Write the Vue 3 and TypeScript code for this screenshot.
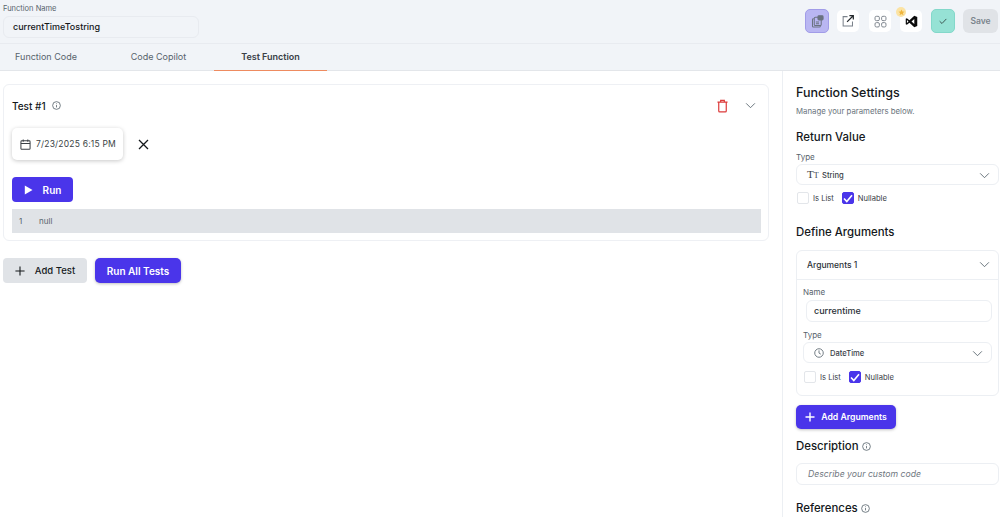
<script setup lang="ts">
const tabs: string[] = ['Function Code', 'Code Copilot', 'Test Function']
</script>

<template>
  <div class="page">
    <header class="topbar">
      <div class="fname">
        <label class="fname-label">Function Name</label>
        <div class="fname-input">currentTimeTostring</div>
      </div>
      <div class="actions">
        <button class="sq sq-purple">
          <svg width="13" height="13" viewBox="0 0 14 14" fill="none" stroke="#6a7280" stroke-width="1.100"><path d="M3 4h-.4a1 1 0 0 0-1 1v7a1 1 0 0 0 1 1h6.400a1 1 0 0 0 1-1v-.6"/><rect x="3.500" y="2.500" width="7.500" height="8.800" rx="1.200"/><rect x="7.500" y=".8" width="5.500" height="4.500" rx="1" fill="#6a7280"/><path d="M5.300 7.500h3.400M5.300 9.300h3.400"/></svg>
        </button>
        <button class="sq sq-white">
          <svg width="14" height="14" viewBox="0 0 15 15" fill="none" stroke="#7b828b" stroke-width="1.100"><path d="M7 2.800H2.300v10h10V8"/><path d="M6.500 8.500 12.800 2.200M9 1.800h4.200V6" stroke="#24282c" stroke-width="1.300"/></svg>
        </button>
        <button class="sq sq-white grid-btn">
          <svg width="13" height="13" viewBox="0 0 15 15" fill="none" stroke="#7b828b" stroke-width="1.100"><rect x="1.200" y="1.500" width="5" height="5" rx="1.500"/><rect x="8.800" y="1.500" width="5" height="5" rx="1.500"/><rect x="1.200" y="8.800" width="5" height="5" rx="1.500"/><rect x="8.800" y="8.800" width="5" height="5" rx="1.500"/></svg>
        </button>
        <button class="sq sq-white vs">
          <span class="star">
            <svg width="7" height="7" viewBox="0 0 10 10"><path d="M5 .6 6.300 3.500l3.100.3-2.400 2 .8 3.100L5 7.300 2.200 8.900 3 5.800.6 3.800l3.100-.3z" fill="#f0b53c"/></svg>
          </span>
          <svg width="13" height="13" viewBox="0 0 14 14" fill="#0b0b0b"><path d="M10 .7 13.200 2.200v9.600L10 13.300 4.800 8.400 2 10.500.8 9.900V4.100L2 3.500l2.800 2.100zM10 4.200 7 7l3 2.800zM2.100 5.300v3.400L3.800 7z"/></svg>
        </button>
        <button class="sq sq-teal">
          <svg width="10" height="10" viewBox="0 0 12 12" fill="none" stroke="#3e5a55" stroke-width="1.200"><path d="M2 6.300 4.800 9 10 3.500"/></svg>
        </button>
        <button class="save">Save</button>
      </div>
    </header>

    <nav class="tabs">
      <div v-for="(t, i) in tabs" :key="t" class="tab" :class="[`tab-${i}`, { active: i === 2 }]">{{ t }}</div>
    </nav>

    <div class="body">
      <main class="main">
        <section class="card">
          <div class="card-head">
            <span class="test-title">Test #1</span>
            <svg class="info" width="9" height="9" viewBox="0 0 10 10" fill="none" stroke="#57636c" stroke-width=".9"><circle cx="5" cy="5" r="4.300"/><path d="M5 4.500v2.600M5 2.700v.8"/></svg>
            <span class="spacer"></span>
            <svg class="trash" width="11" height="14" viewBox="0 0 12 14" fill="none" stroke="#dc3a3a" stroke-width="1.300"><path d="M.5 2.800h11M4 2.600V.9h4v1.700M1.900 3v9.500a1 1 0 0 0 1 1h6.200a1 1 0 0 0 1-1V3"/></svg>
            <svg class="chev-main" width="11" height="7" viewBox="0 0 12 8" fill="none" stroke="#57636c" stroke-width="1"><path d="M1 1.500 6 6.500l5-5"/></svg>
          </div>
          <div class="date-row">
            <div class="date">
              <svg width="11" height="11" viewBox="0 0 12 12" fill="none" stroke="#3a3f45" stroke-width="1.100"><rect x="1" y="2" width="10" height="9.300" rx="1"/><path d="M1 4.800h10M3.500.5v2.500M8.500.5v2.500"/></svg>
              <span>7/23/2025 6:15 PM</span>
            </div>
            <svg class="close" width="11" height="11" viewBox="0 0 11 11" fill="none" stroke="#14181b" stroke-width="1.300"><path d="M1 1l9 9M10 1l-9 9"/></svg>
          </div>
          <button class="run">
            <svg width="9" height="10" viewBox="0 0 9 10"><path d="M.8.500 8.500 5 .8 9.500z" fill="#fff"/></svg>
            <span>Run</span>
          </button>
          <div class="output"><span class="ln">1</span><span>null</span></div>
        </section>
        <div class="main-actions">
          <button class="add-test">
            <svg width="10" height="10" viewBox="0 0 12 12" stroke="#14181b" stroke-width="1.300"><path d="M6 .5v11M.5 6h11"/></svg>
            <span>Add Test</span>
          </button>
          <button class="run-all">Run All Tests</button>
        </div>
      </main>

      <aside class="side">
        <h2 class="side-title">Function Settings</h2>
        <p class="side-sub">Manage your parameters below.</p>

        <h3 class="h3 return-h">Return Value</h3>
        <div class="lbl type-lbl">Type</div>
        <div class="select">
          <span class="tt">T<small>T</small></span>
          <span>String</span>
          <span class="spacer"></span>
          <svg width="11" height="7" viewBox="0 0 12 8" fill="none" stroke="#57636c" stroke-width="1"><path d="M1 1.500 6 6.500l5-5"/></svg>
        </div>
        <div class="checks">
          <span class="cb"></span><span class="cb-lbl">Is List</span>
          <span class="cb on"><svg width="10" height="9" viewBox="0 0 10 9" fill="none" stroke="#fff" stroke-width="1.600"><path d="M1 4.500 3.800 7.500 9 1.200"/></svg></span><span class="cb-lbl">Nullable</span>
        </div>

        <h3 class="h3 define-h">Define Arguments</h3>
        <div class="arg">
          <div class="arg-head">
            <span>Arguments 1</span>
            <svg width="11" height="7" viewBox="0 0 12 8" fill="none" stroke="#57636c" stroke-width="1"><path d="M1 1.500 6 6.500l5-5"/></svg>
          </div>
          <div class="arg-body">
            <div class="lbl">Name</div>
            <div class="name-input">currentime</div>
            <div class="lbl arg-type">Type</div>
            <div class="select inner">
              <svg width="10" height="10" viewBox="0 0 11 11" fill="none" stroke="#57636c" stroke-width=".9"><circle cx="5.500" cy="5.500" r="4.700"/><path d="M5.500 2.600v3l2 1.200"/></svg>
              <span>DateTime</span>
              <span class="spacer"></span>
              <svg width="11" height="7" viewBox="0 0 12 8" fill="none" stroke="#57636c" stroke-width="1"><path d="M1 1.500 6 6.500l5-5"/></svg>
            </div>
            <div class="checks inner-checks">
              <span class="cb"></span><span class="cb-lbl">Is List</span>
              <span class="cb on"><svg width="10" height="9" viewBox="0 0 10 9" fill="none" stroke="#fff" stroke-width="1.600"><path d="M1 4.500 3.800 7.500 9 1.200"/></svg></span><span class="cb-lbl">Nullable</span>
            </div>
          </div>
        </div>

        <button class="add-arg">
          <svg width="10" height="10" viewBox="0 0 10 10" stroke="#fff" stroke-width="1.400"><path d="M5 .5v9M.5 5h9"/></svg>
          <span>Add Arguments</span>
        </button>

        <div class="h3 row-h desc-h">Description
          <svg width="9" height="9" viewBox="0 0 10 10" fill="none" stroke="#57636c" stroke-width=".9"><circle cx="5" cy="5" r="4.300"/><path d="M5 4.500v2.600M5 2.700v.8"/></svg>
        </div>
        <div class="desc">Describe your custom code</div>
        <div class="h3 row-h ref-h">References
          <svg width="9" height="9" viewBox="0 0 10 10" fill="none" stroke="#57636c" stroke-width=".9"><circle cx="5" cy="5" r="4.300"/><path d="M5 4.500v2.600M5 2.700v.8"/></svg>
        </div>
      </aside>
    </div>
  </div>
</template>

<style>
html, body { margin: 0; background: #fff; overflow: hidden; }
</style>

<style scoped>
* { box-sizing: border-box; }
.page { width: 1000px; height: 517px; overflow: hidden; display: flex; flex-direction: column; font-family: "Inter", "Noto Sans", sans-serif; color: #14181b; background: #fff; }
button { font-family: inherit; border: 0; padding: 0; cursor: pointer; }
.spacer { flex: 1; }

.topbar { height: 44px; flex: none; background: #f1f4f8; border-bottom: 1px solid #e8ebf0; display: flex; justify-content: space-between; padding: 0 2px 0 3px; }
.fname { padding-top: 4px; }
.fname-label { display: block; font-size: 7.500px; line-height: 10px; color: #57636c; }
.fname-input { margin-top: 2px; width: 196px; height: 22px; border: 1px solid #e8ebf0; border-radius: 6px; padding-left: 9px; font-size: 9px; line-height: 20px; font-weight: 500; color: #14181b; }
.actions { display: flex; align-items: center; gap: 8px; padding-bottom: 1px; }
.sq { width: 22px; height: 22px; border-radius: 5px; display: flex; align-items: center; justify-content: center; position: relative; }
.sq-purple { width: 24px; height: 24px; background: #b9b6f2; border: 1px solid #a19ce8; }
.sq-white { background: #fff; }
.sq-teal { width: 24px; height: 24px; background: #96e2d5; border: 1px solid #83d8ca; margin-left: 1px; }
.grid-btn { margin-left: 2px; }
.vs { margin-left: 1px; }
.star { position: absolute; top: -3px; left: -4px; width: 10px; height: 10px; border-radius: 50%; background: #fbe3a4; display: flex; align-items: center; justify-content: center; }
.save { width: 35px; height: 24px; border-radius: 6px; background: #e0e3e7; color: #7a838c; font-size: 8.500px; font-weight: 600; }

.tabs { height: 27px; flex: none; background: #f1f4f8; border-bottom: 1px solid #e3e6ea; display: flex; position: relative; }
.tab { font-size: 9px; line-height: 26px; text-align: center; color: #57636c; }
.tab-0 { width: 92px; }
.tab-1 { width: 122px; padding-left: 11px; }
.tab-2 { width: 113px; font-weight: 600; color: #3a4047; height: 27px; border-bottom: 1px solid #ee8b60; }

.body { flex: 1; display: flex; min-height: 0; }
.main { width: 783px; flex: none; padding: 13px 13px 0 3px; border-right: 1px solid #eceff3; }
.card { height: 157px; border: 1px solid #eef0f4; border-radius: 6px; padding: 0 7px 6px 8px; }
.card-head { height: 41px; display: flex; align-items: center; gap: 6px; padding-right: 5px; }
.test-title { font-size: 10px; font-weight: 500; }
.trash { margin-right: 11px; }
.date-row { display: flex; align-items: center; margin-top: 2px; }
.date { width: 111px; height: 32px; border-radius: 5px; background: #fff; box-shadow: 0 1px 4px rgba(0,0,0,.22); display: flex; align-items: center; gap: 5px; padding-left: 8px; font-size: 8.500px; letter-spacing: .2px; color: #3a3f45; white-space: nowrap; }
.close { margin-left: 15px; }
.run { width: 61px; height: 25px; margin-top: 17px; border-radius: 4px; background: #4a35ea; color: #fff; font-size: 10px; font-weight: 600; display: flex; align-items: center; justify-content: center; gap: 10px; }
.output { height: 24px; margin-top: 7px; background: #e0e3e7; display: flex; align-items: center; font-size: 8px; color: #57636c; padding-left: 7px; }
.ln { width: 20px; }

.main-actions { display: flex; gap: 8px; margin-top: 17px; }
.add-test { width: 84px; height: 25px; border-radius: 4px; background: #e0e3e7; color: #14181b; font-size: 9.500px; font-weight: 500; display: flex; align-items: center; justify-content: center; gap: 10px; }
.run-all { width: 86px; height: 25px; border-radius: 5px; background: #4a35ea; color: #fff; font-size: 10px; font-weight: 600; box-shadow: 0 1px 3px rgba(0,0,0,.25); }

.side { flex: 1; padding: 14px 1px 0 13px; min-width: 0; overflow: hidden; }
.side-title { margin: 0; font-size: 12.500px; line-height: 15px; font-weight: 500; color: #14181b; }
.side-sub { margin: 6px 0 0; font-size: 7.800px; line-height: 10px; color: #6a747d; }
.h3 { margin: 0; font-size: 11.400px; line-height: 14px; font-weight: 500; color: #14181b; }
.return-h { margin-top: 14px; }
.lbl { font-size: 8px; line-height: 10px; color: #57636c; }
.type-lbl { margin-top: 8px; }
.select { height: 21px; margin-top: 2px; padding: 1px 8px 0 10px; border: 1px solid #eceff3; border-radius: 6px; display: flex; align-items: center; gap: 5px; font-size: 7.600px; color: #3a4047; font-weight: 500; }
.tt { font-size: 11px; line-height: 11px; font-family: "Liberation Serif", serif; color: #3a4047; width: 10px; white-space: nowrap; }
.tt small { font-size: 8px; }
.checks { display: flex; align-items: center; margin-top: 6px; height: 14px; font-size: 7.600px; color: #3a4047; padding-left: 1px; }
.cb { width: 12px; height: 12px; border: 1px solid #e3e6ea; border-radius: 2px; display: flex; align-items: center; justify-content: center; flex: none; }
.cb.on { background: #4a35ea; border-color: #4a35ea; margin-left: 8px; }
.cb-lbl { margin-left: 4px; }
.define-h { margin-top: 20px; }
.arg { margin-top: 11px; height: 146px; border: 1px solid #eceff3; border-radius: 6px; }
.arg-head { height: 29px; padding: 0 8px 1px 10px; border-bottom: 1px solid #eceff3; display: flex; align-items: center; justify-content: space-between; font-size: 8.500px; font-weight: 500; color: #2c3238; }
.arg-body { padding: 7px 6px 0 6px; }
.name-input { margin: 3px 0 0 3px; height: 22px; border: 1px solid #eceff3; border-radius: 6px; padding-left: 7px; font-size: 9px; line-height: 20px; color: #2c3238; font-weight: 500; }
.arg-type { margin-top: 8px; }
.inner { margin-top: 2px; gap: 6px; }
.inner-checks { margin-top: 7px; }
.add-arg { margin-top: 9px; width: 100px; height: 24px; border-radius: 5px; background: #4a35ea; color: #fff; font-size: 8.700px; font-weight: 600; display: flex; align-items: center; justify-content: center; gap: 6px; box-shadow: 0 1px 3px rgba(0,0,0,.25); }
.row-h { display: flex; align-items: center; gap: 3px; }
.desc-h { margin-top: 10px; }
.desc { margin-top: 10px; height: 22px; border: 1px solid #eceff3; border-radius: 6px; padding-left: 11px; font-size: 8.700px; line-height: 20px; font-style: italic; color: #6f7780; }
.ref-h { margin-top: 16px; }
</style>
